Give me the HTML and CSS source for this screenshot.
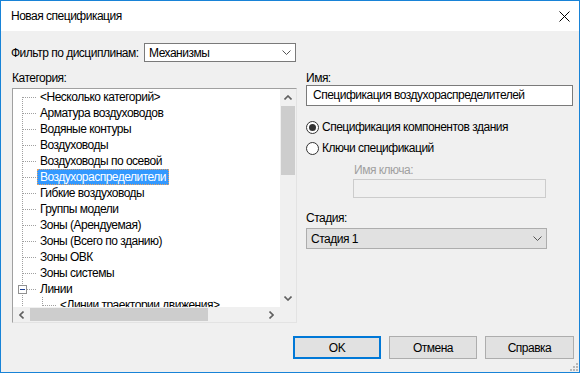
FILE: index.html
```html
<!DOCTYPE html>
<html lang="ru">
<head>
    <meta charset="UTF-8">
    <title>Новая спецификация</title>
    <link rel="stylesheet" href="styles.css">
</head>
<body>
    <div class="dialog">
        <div class="titlebar">
            <span class="title">Новая спецификация</span>
            <svg class="close" width="11" height="11" viewBox="0 0 11 11"><path d="M0.5 0.5 L10.5 10.5 M10.5 0.5 L0.5 10.5" stroke="#000" stroke-width="1"/></svg>
        </div>
        <div class="content">
            <div class="filter-row">
                <span class="filter-label">Фильтр по дисциплинам:</span>
                <div class="combo combo-white">
                    <span>Механизмы</span>
                    <svg width="9" height="5" viewBox="0 0 9 5"><polyline points="0.5,0.5 4.5,4.5 8.5,0.5" fill="none" stroke="#555" stroke-width="1"/></svg>
                </div>
            </div>
            <div class="main">
                <div class="left">
                    <div class="label">Категория:</div>
                    <div class="tree">
                        <div class="tree-view">
                            <div class="node first"><span class="branch"></span><span class="text">&lt;Несколько категорий&gt;</span></div>
                            <div class="node"><span class="branch"></span><span class="text">Арматура воздуховодов</span></div>
                            <div class="node"><span class="branch"></span><span class="text">Водяные контуры</span></div>
                            <div class="node"><span class="branch"></span><span class="text">Воздуховоды</span></div>
                            <div class="node"><span class="branch"></span><span class="text">Воздуховоды по осевой</span></div>
                            <div class="node"><span class="branch"></span><span class="text selected">Воздухораспределители</span></div>
                            <div class="node"><span class="branch"></span><span class="text">Гибкие воздуховоды</span></div>
                            <div class="node"><span class="branch"></span><span class="text">Группы модели</span></div>
                            <div class="node"><span class="branch"></span><span class="text">Зоны (Арендуемая)</span></div>
                            <div class="node"><span class="branch"></span><span class="text">Зоны (Всего по зданию)</span></div>
                            <div class="node"><span class="branch"></span><span class="text">Зоны ОВК</span></div>
                            <div class="node"><span class="branch"></span><span class="text">Зоны системы</span></div>
                            <div class="node"><span class="branch open"><span class="toggle"></span></span><span class="text">Линии</span></div>
                            <div class="node"><span class="branch child"></span><span class="text">&lt;Линии траектории движения&gt;</span></div>
                        </div>
                        <div class="vscroll">
                            <div class="arrow">
                                <svg width="8" height="5" viewBox="0 0 8 5"><polyline points="0.5,4.5 4,1 7.5,4.5" fill="none" stroke="#606060" stroke-width="1.6"/></svg>
                            </div>
                            <div class="vtrack"><div class="vthumb"></div></div>
                            <div class="arrow">
                                <svg width="8" height="5" viewBox="0 0 8 5"><polyline points="0.5,0.5 4,4 7.5,0.5" fill="none" stroke="#606060" stroke-width="1.6"/></svg>
                            </div>
                        </div>
                        <div class="hscroll">
                            <div class="arrow">
                                <svg width="5" height="8" viewBox="0 0 5 8"><polyline points="4.5,0.5 1,4 4.5,7.5" fill="none" stroke="#606060" stroke-width="1.6"/></svg>
                            </div>
                            <div class="htrack"><div class="hthumb"></div></div>
                            <div class="arrow">
                                <svg width="5" height="8" viewBox="0 0 5 8"><polyline points="0.5,0.5 4,4 0.5,7.5" fill="none" stroke="#606060" stroke-width="1.6"/></svg>
                            </div>
                        </div>
                        <div class="corner"></div>
                    </div>
                </div>
                <div class="right">
                    <div class="label label-name">Имя:</div>
                    <div class="textbox">Спецификация воздухораспределителей</div>
                    <div class="radio radio-first"><span class="dot on"></span><span>Спецификация компонентов здания</span></div>
                    <div class="radio"><span class="dot"></span><span>Ключи спецификаций</span></div>
                    <div class="label disabled">Имя ключа:</div>
                    <div class="textbox-disabled"></div>
                    <div class="label label-stage">Стадия:</div>
                    <div class="combo combo-gray">
                        <span>Стадия 1</span>
                        <svg width="9" height="5" viewBox="0 0 9 5"><polyline points="0.5,0.5 4.5,4.5 8.5,0.5" fill="none" stroke="#555" stroke-width="1"/></svg>
                    </div>
                </div>
            </div>
            <div class="buttons">
                <button class="btn default">OK</button>
                <button class="btn">Отмена</button>
                <button class="btn btn-help">Справка</button>
            </div>
        </div>
        <svg class="grip" width="9" height="9" viewBox="0 0 9 9">
            <rect x="7" y="1" width="2" height="2" fill="#b8b8b8"/>
            <rect x="4" y="4" width="2" height="2" fill="#b8b8b8"/>
            <rect x="7" y="4" width="2" height="2" fill="#b8b8b8"/>
            <rect x="1" y="7" width="2" height="2" fill="#b8b8b8"/>
            <rect x="4" y="7" width="2" height="2" fill="#b8b8b8"/>
            <rect x="7" y="7" width="2" height="2" fill="#b8b8b8"/>
        </svg>
    </div>
</body>
</html>
```
FILE: styles.css
```css
* { margin:0; padding:0; box-sizing:border-box;}
html, body { width:580px; height:373px; overflow:hidden;}
body { font-family:"Liberation Sans", Arial, sans-serif; font-size:12px; letter-spacing:-0.5px; color:#000; background:#fff;}

.dialog { width:580px; height:373px; border:1px solid #1883d7; display:flex; flex-direction:column; position:relative; background:#f0f0f0;}

.titlebar { height:30px; background:#fff; display:flex; align-items:center; justify-content:space-between; padding:0 9px 0 10px;}
.title { font-size:12px; line-height:16px;}

.content { flex:1; display:flex; flex-direction:column; padding:12px 5px 13px 10px;}

.filter-row { display:flex; align-items:center; height:19px;}
.filter-label { width:133px; white-space:nowrap;}
.combo { display:flex; align-items:center; justify-content:space-between; padding:0 4px 0 4px;}
.combo-white { width:152px; height:19px; background:#fff; border:1px solid #7a7a7a;}
.combo-gray { width:241px; height:21px; background:#e1e1e1; border:1px solid #adadad;}

.main { display:flex; padding-top:8px; gap:9px;}
.left { margin-left:1px;}
.label { height:16px; line-height:16px; margin-bottom:2px; white-space:nowrap;}

.tree { width:285px; height:235px; border:1px solid; border-color:#a0a0a0 #e3e3e3 #e3e3e3 #a0a0a0; background:#fff;
    display:grid; grid-template-columns:1fr 16px; grid-template-rows:1fr 15px;}
.tree-view { overflow:hidden; background:#fff;}
.node { display:flex; height:16px; line-height:16px; white-space:nowrap;}
.branch { width:24px; height:16px; flex:none;
    background:
        repeating-linear-gradient(to bottom, #a0a0a0 0 1px, transparent 1px 2px) 9px 0 / 1px 16px no-repeat,
        repeating-linear-gradient(to right, #a0a0a0 0 1px, transparent 1px 2px) 10px 8px / 14px 1px no-repeat;}
.node.first .branch {
    background:
        repeating-linear-gradient(to bottom, #a0a0a0 0 1px, transparent 1px 2px) 9px 8px / 1px 8px no-repeat,
        repeating-linear-gradient(to right, #a0a0a0 0 1px, transparent 1px 2px) 10px 8px / 14px 1px no-repeat;}
.branch.open { display:flex; align-items:center; padding-left:5px;
    background:
        repeating-linear-gradient(to bottom, #a0a0a0 0 1px, transparent 1px 2px) 9px 0 / 1px 16px no-repeat,
        repeating-linear-gradient(to right, #a0a0a0 0 1px, transparent 1px 2px) 14px 8px / 10px 1px no-repeat;}
.toggle { width:9px; height:9px; border:1px solid #919191; background:#fff linear-gradient(#1c3f94, #1c3f94) center / 5px 1px no-repeat;}
.branch.child { width:44px;
    background:
        repeating-linear-gradient(to bottom, #a0a0a0 0 1px, transparent 1px 2px) 9px 0 / 1px 16px no-repeat,
        repeating-linear-gradient(to bottom, #a0a0a0 0 1px, transparent 1px 2px) 29px 0 / 1px 16px no-repeat,
        repeating-linear-gradient(to right, #a0a0a0 0 1px, transparent 1px 2px) 30px 8px / 14px 1px no-repeat;}
.text { padding:0 3px; height:16px;}
.text.selected { background:#3399ff; color:#fff; outline:1px dotted #e8a060; outline-offset:-1px;}

.vscroll { grid-row:1; grid-column:2; background:#f0f0f0; display:flex; flex-direction:column;}
.vscroll .arrow { height:17px; display:flex; align-items:center; justify-content:center;}
.vtrack { flex:1;}
.vthumb { height:69px; margin:0 1px; background:#cdcdcd;}
.hscroll { grid-row:2; grid-column:1; background:#f0f0f0; display:flex;}
.hscroll .arrow { width:17px; display:flex; align-items:center; justify-content:center;}
.htrack { flex:1; display:flex; align-items:center;}
.hthumb { width:178px; height:13px; background:#cdcdcd;}
.corner { grid-row:2; grid-column:2; background:#f0f0f0;}

.right { width:267px; display:flex; flex-direction:column;}
.label-name { height:15px; margin-bottom:0;}
.textbox { height:21px; border:1px solid #7a7a7a; background:#fff; padding:0 6px; line-height:19px; white-space:nowrap;}
.radio { display:flex; align-items:center; gap:3px; height:16px; margin-top:5px; white-space:nowrap;}
.radio-first { margin-top:13px;}
.dot { width:13px; height:13px; flex:none; border:1px solid #333; border-radius:50%; background:#fff; display:flex; align-items:center; justify-content:center;}
.dot.on::after { content:""; width:7px; height:7px; border-radius:50%; background:#333;}
.label.disabled { color:#a0a0a0; margin:6px 0 1px 48px;}
.textbox-disabled { width:193px; height:19px; margin-left:47px; border:1px solid #cccccc; background:#f0f0f0;}
.label-stage { margin-top:12px;}

.buttons { margin-top:auto; display:flex; justify-content:flex-end; gap:8px;}
.btn { width:88px; height:23px; font:inherit; letter-spacing:inherit; background:#e1e1e1; border:1px solid #adadad; color:#000;}
.btn.default { border:2px solid #0078d7;}
.btn-help { width:89px;}

.grip { position:absolute; right:1px; bottom:1px;}
```
